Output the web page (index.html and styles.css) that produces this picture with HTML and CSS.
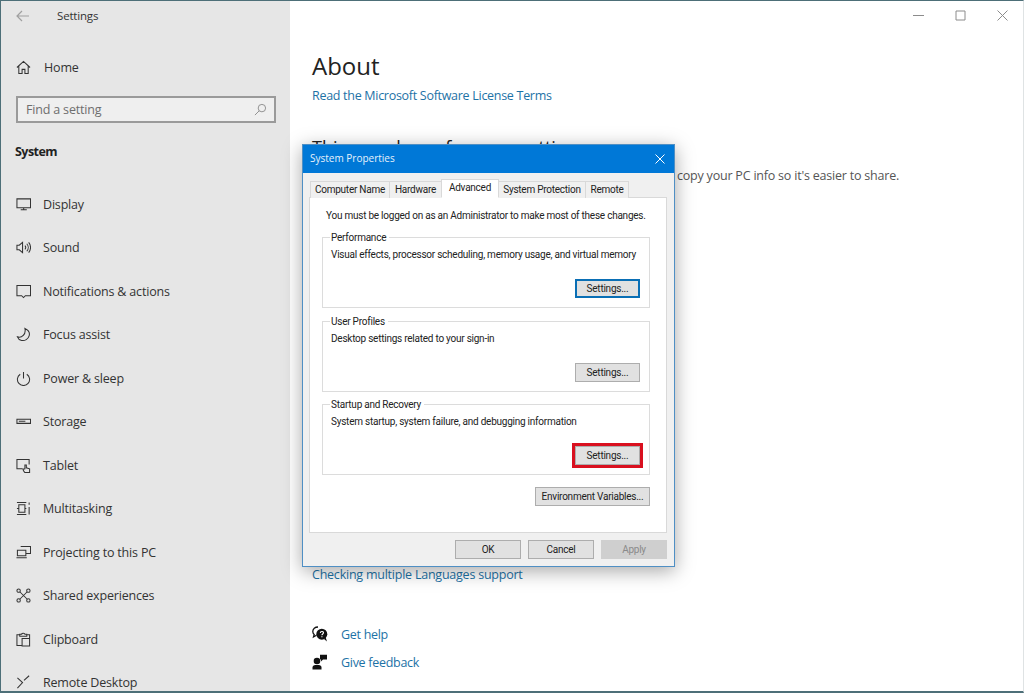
FILE: index.html
```html
<!DOCTYPE html>
<html lang="en">
<head>
<meta charset="utf-8">
<title>Settings</title>
<link rel="stylesheet" href="styles.css">
</head>
<body>
<div class="window">
  <aside class="sidebar">
    <div class="topbar">
      <svg class="back" width="14" height="12" viewBox="0 0 14 12"><path d="M13 6H1.500M6 1 1 6l5 5"/></svg>
      <span class="app-title">Settings</span>
    </div>
    <div class="nav-item home">
      <svg class="icon" viewBox="0 0 16 16"><path d="M1 8 8 1.500 15 8M3 6.500V14.500H6.500V10H9.500V14.500H13V6.500"/></svg>
      <span>Home</span>
    </div>
    <div class="search">
      <span>Find a setting</span>
      <svg class="search-icon" viewBox="0 0 14 14"><circle cx="8.500" cy="5.500" r="4"/><path d="M5.500 8.500 1 13"/></svg>
    </div>
    <div class="section">System</div>
    <nav class="nav">
      <div class="nav-item"><svg class="icon" viewBox="0 0 16 16"><path d="M1 2H15.500V11.500H1ZM5 13.500H11.500M8.200 11.500V13.500"/></svg><span>Display</span></div>
      <div class="nav-item"><svg class="icon" viewBox="0 0 16 16"><path d="M1 5.500H3.500L7 2.500V13.500L3.500 10.500H1ZM9.500 6a3 3 0 0 1 0 4M11.500 4a6 6 0 0 1 0 8M13.500 2.500a8.500 8.500 0 0 1 0 11"/></svg><span>Sound</span></div>
      <div class="nav-item"><svg class="icon" viewBox="0 0 16 16"><path d="M1 1.500H15.500V12.500H10L8 14.500 6 12.500H1Z"/></svg><span>Notifications &amp; actions</span></div>
      <div class="nav-item"><svg class="icon" viewBox="0 0 16 16"><path d="M9.500 1.500C13 3 15 6 14 9.500 13 13 9.500 15 6 14.300 3.500 13.800 2 12 1.500 10.500 6 12 11 8 9.500 1.500Z"/></svg><span>Focus assist</span></div>
      <div class="nav-item"><svg class="icon" viewBox="0 0 16 16"><path d="M8 1V8M4.500 3.500a6.500 6.500 0 1 0 7 0"/></svg><span>Power &amp; sleep</span></div>
      <div class="nav-item"><svg class="icon" viewBox="0 0 16 16"><path d="M1 5.500H15.500V10H1ZM3 7.800H10"/></svg><span>Storage</span></div>
      <div class="nav-item"><svg class="icon" viewBox="0 0 16 16"><path d="M7 11.500H1V1.500H14V7M9.500 15.500C8 14 7.500 13 7.500 12L9.500 11.500V7.500H11V10.500L14.500 11.500V15.500Z"/></svg><span>Tablet</span></div>
      <div class="nav-item"><svg class="icon" viewBox="0 0 16 16"><path d="M1 1.500H11M1 14.500H11M3 4H9.500V12H3ZM1 8H3M9.500 8H11M14 1.500V4M14 6.500V14.500"/></svg><span>Multitasking</span></div>
      <div class="nav-item"><svg class="icon" viewBox="0 0 16 16"><path d="M5 1.500H15.500V9H10.500M1.500 5.500H10.500V11.500H1.500ZM.5 13.500H11.500"/></svg><span>Projecting to this PC</span></div>
      <div class="nav-item"><svg class="icon" viewBox="0 0 16 16"><circle cx="2.800" cy="2.800" r="1.800"/><circle cx="13.200" cy="2.800" r="1.800"/><circle cx="2.800" cy="13.200" r="1.800"/><circle cx="13.200" cy="13.200" r="1.800"/><path d="M4 4 12 12M12 4 4 12"/></svg><span>Shared experiences</span></div>
      <div class="nav-item"><svg class="icon" viewBox="0 0 16 16"><path d="M3.500 3H1V14.500H6M12 3H14.500V7M4 4.500V2.500H6C6 .8 9.500 .8 9.500 2.500H11.500V4.500ZM6.500 7H14.500V15H6.500Z"/></svg><span>Clipboard</span></div>
      <div class="nav-item"><svg class="icon" viewBox="0 0 16 16"><path d="M1.500 3 7 8 1.500 14M14 .8 8.500 5.800"/></svg><span>Remote Desktop</span></div>
    </nav>
  </aside>

  <main class="content">
    <div class="caption-buttons">
      <svg class="caption" viewBox="0 0 11 11"><path d="M0 5.500H11"/></svg>
      <svg class="caption" viewBox="0 0 11 11"><path d="M1 1H10V10H1Z"/></svg>
      <svg class="caption" viewBox="0 0 11 11"><path d="M.5 .5 10.500 10.500M10.500 .5 .5 10.500"/></svg>
    </div>
    <h1 class="page-title">About</h1>
    <a class="link license">Read the Microsoft Software License Terms</a>
    <h2 class="subhead">This page has a few new settings</h2>
    <p class="note">copy your PC info so it's easier to share.</p>
    <a class="link languages">Checking multiple Languages support</a>
    <div class="help-row first">
      <svg class="help-icon" viewBox="0 0 16 16"><path d="M6 1C3 1 .8 3 .8 5.500c0 1.200.5 2.300 1.400 3L1.500 11 4.500 9.300" fill="none" stroke="#111" stroke-width="1.300"/><circle cx="9.800" cy="8.200" r="5.500" fill="#111"/><path d="M12 13 15 15.500 13.500 11Z" fill="#111"/><path d="M8.300 7c0-2 3.200-2 3.200-.2 0 1.200-1.600 1.200-1.600 2.500M9.900 10.200v1" fill="none" stroke="#fff" stroke-width="1.100"/></svg>
      <a class="link">Get help</a>
    </div>
    <div class="help-row">
      <svg class="help-icon" viewBox="0 0 16 16"><circle cx="5" cy="7" r="3.300" fill="#111"/><path d="M.5 15.500V13.500C.5 11.500 2 11 5 11S9.500 11.500 9.500 13.500V15.500Z" fill="#111"/><path d="M8 .8H15V5.500H11L9 7.500V5.500H8Z" fill="#111"/></svg>
      <a class="link">Give feedback</a>
    </div>
  </main>
</div>

<section class="dialog">
  <header class="dialog-title">
    <span>System Properties</span>
    <svg class="dialog-close" viewBox="0 0 10 10"><path d="M.5 .5 9.500 9.500M9.500 .5 .5 9.500"/></svg>
  </header>
  <div class="dialog-body">
    <div class="tabs">
      <span class="tab t1">Computer Name</span>
      <span class="tab t2">Hardware</span>
      <span class="tab active">Advanced</span>
      <span class="tab t4">System Protection</span>
      <span class="tab t5">Remote</span>
    </div>
    <div class="panel">
      <p class="admin">You must be logged on as an Administrator to make most of these changes.</p>
      <fieldset class="group">
        <legend>Performance</legend>
        <p>Visual effects, processor scheduling, memory usage, and virtual memory</p>
        <div class="group-action"><button class="btn focused">Settings...</button></div>
      </fieldset>
      <fieldset class="group">
        <legend>User Profiles</legend>
        <p>Desktop settings related to your sign-in</p>
        <div class="group-action"><button class="btn">Settings...</button></div>
      </fieldset>
      <fieldset class="group">
        <legend>Startup and Recovery</legend>
        <p>System startup, system failure, and debugging information</p>
        <div class="group-action"><button class="btn highlighted">Settings...</button></div>
      </fieldset>
      <div class="env-row"><button class="btn env">Environment Variables...</button></div>
    </div>
    <div class="dialog-actions">
      <button class="btn action">OK</button>
      <button class="btn action">Cancel</button>
      <button class="btn action disabled">Apply</button>
    </div>
  </div>
</section>
</body>
</html>
```
FILE: styles.css
```css
* { box-sizing: border-box; }
html, body { margin: 0; height: 693px; overflow: hidden; }
body { font-family: "Open Sans", "Noto Sans", sans-serif; color: #222; background: #fff; position: relative; }

.window { display: flex; height: 693px; border: 1px solid #4d6f78; border-width: 1px 1px 2px 1px; border-right-color: #dfe3e4; }

.sidebar { width: 289px; flex: none; background: #e6e6e6; padding-left: 15px; font-size: 12.500px; letter-spacing: -.18px; overflow: hidden; }
.topbar { height: 29px; display: flex; align-items: center; }
.back { fill: none; stroke: #a0a0a0; stroke-width: 1.200; }
.app-title { margin-left: 27px; font-size: 11.500px; color: #333; }
.nav-item { height: 43.500px; display: flex; align-items: center; gap: 12px; color: #333; }
.nav-item.home { margin-top: 15px; height: 44px; gap: 13px; }
.icon { width: 15px; height: 15px; flex: none; fill: none; stroke: #333; stroke-width: 1.100; }
.search { width: 260px; height: 27px; margin-top: 7px; background: #efefef; border: 2px solid #9a9a9a; display: flex; align-items: center; justify-content: space-between; padding: 0 7px 1px 8px; color: #6e6e6e; }
.search-icon { width: 13px; height: 13px; fill: none; stroke: #8a8a8a; stroke-width: 1; }
.section { margin: 19px 0 0 -1px; height: 20px; line-height: 20px; font-weight: 700; letter-spacing: -.55px; color: #222; }
.nav { margin-top: 20.500px; }

.content { flex: 1; padding-left: 22px; position: relative; min-width: 0; }
.caption-buttons { display: flex; justify-content: flex-end; gap: 31px; padding: 9px 15px 0 0; height: 31px; }
.caption { width: 11px; height: 11px; fill: none; stroke: #8c8c8c; stroke-width: 1; }
.page-title { margin: 17px 0 0; font-size: 24px; line-height: 34px; font-weight: 400; color: #222; }
.link { color: #1d72a6; font-size: 12.500px; letter-spacing: -.29px; display: block; }
.license { margin-top: 3px; line-height: 20px; }
.subhead { margin: 28px 0 0; font-size: 18px; line-height: 26px; font-weight: 400; color: #222; }
.note { margin: 6px 0 0 365px; font-size: 12.500px; letter-spacing: -.21px; line-height: 20px; color: #555; }
.languages { margin-top: 379px; line-height: 20px; letter-spacing: -.23px; }
.help-row { display: flex; align-items: center; gap: 13px; height: 28px; }
.help-row.first { margin-top: 35px; }
.help-icon { width: 16px; height: 16px; flex: none; }

.dialog { position: absolute; left: 302px; top: 144px; width: 373px; height: 423px; border: 1px solid #4f8fc4; background: #f0f0f0; box-shadow: 0 4px 18px rgba(0,0,0,.35); display: flex; flex-direction: column; font-family: Roboto, "Liberation Sans", sans-serif; font-size: 10px; letter-spacing: -.24px; color: #222; }
.dialog-title { height: 28px; flex: none; background: #0078d7; color: #e6f1fb; display: flex; align-items: center; justify-content: space-between; padding: 0 9px 2px 7px; font-family: "Open Sans", sans-serif; font-size: 10px; letter-spacing: 0; }
.dialog-close { width: 10px; height: 10px; fill: none; stroke: #fff; stroke-width: 1; margin-top: 2px; }
.dialog-body { flex: 1; padding: 6px 7px 0 6px; display: flex; flex-direction: column; min-height: 0; }
.tabs { display: flex; align-items: flex-end; height: 19px; padding-left: 1px; margin-bottom: -1px; position: relative; z-index: 1; }
.tab { height: 17px; line-height: 15px; text-align: center; background: #f0f0f0; border: 1px solid #d9d9d9; border-bottom: 0; margin-right: -1px; white-space: nowrap; }
.t1 { width: 80px; }
.t2 { width: 53px; }
.t4 { width: 88px; }
.t5 { width: 44px; }
.tab.active { width: 58px; height: 19px; line-height: 15px; background: #fff; position: relative; z-index: 1; border-bottom: 1px solid #fff; }
.panel { height: 336px; flex: none; background: #fff; border: 1px solid #d9d9d9; padding: 11px 16px 0 12px; }
.admin { margin: 0 0 8px 4px; line-height: 14px; white-space: nowrap; }
.group { margin: 0 0 6.500px; padding: 3px 9px 0 8px; height: 77px; border: 1px solid #dcdcdc; min-width: 0; }
.group legend { padding: 0 3px 0 1px; margin-left: -1px; line-height: 13px; }
.group p { margin: 1px 0 0; line-height: 14px; white-space: nowrap; }
.group-action { display: flex; justify-content: flex-end; margin-top: 17px; }
.btn { font: inherit; letter-spacing: inherit; color: #222; background: #e1e1e1; border: 1px solid #adadad; width: 65px; height: 19px; padding: 0; white-space: nowrap; }
.btn.focused { border: 2px solid #0a6fb5; }
.btn.highlighted { outline: 3px solid #d9101f; outline-offset: 0; }
.env-row { display: flex; justify-content: flex-end; margin-top: 12px; }
.btn.env { width: 115px; }
.dialog-actions { display: flex; justify-content: flex-end; gap: 7px; padding-top: 7px; }
.btn.action { width: 66px; }
.btn.disabled { background: #cfcfcf; border-color: #cfcfcf; color: #8a8a8a; }
```
